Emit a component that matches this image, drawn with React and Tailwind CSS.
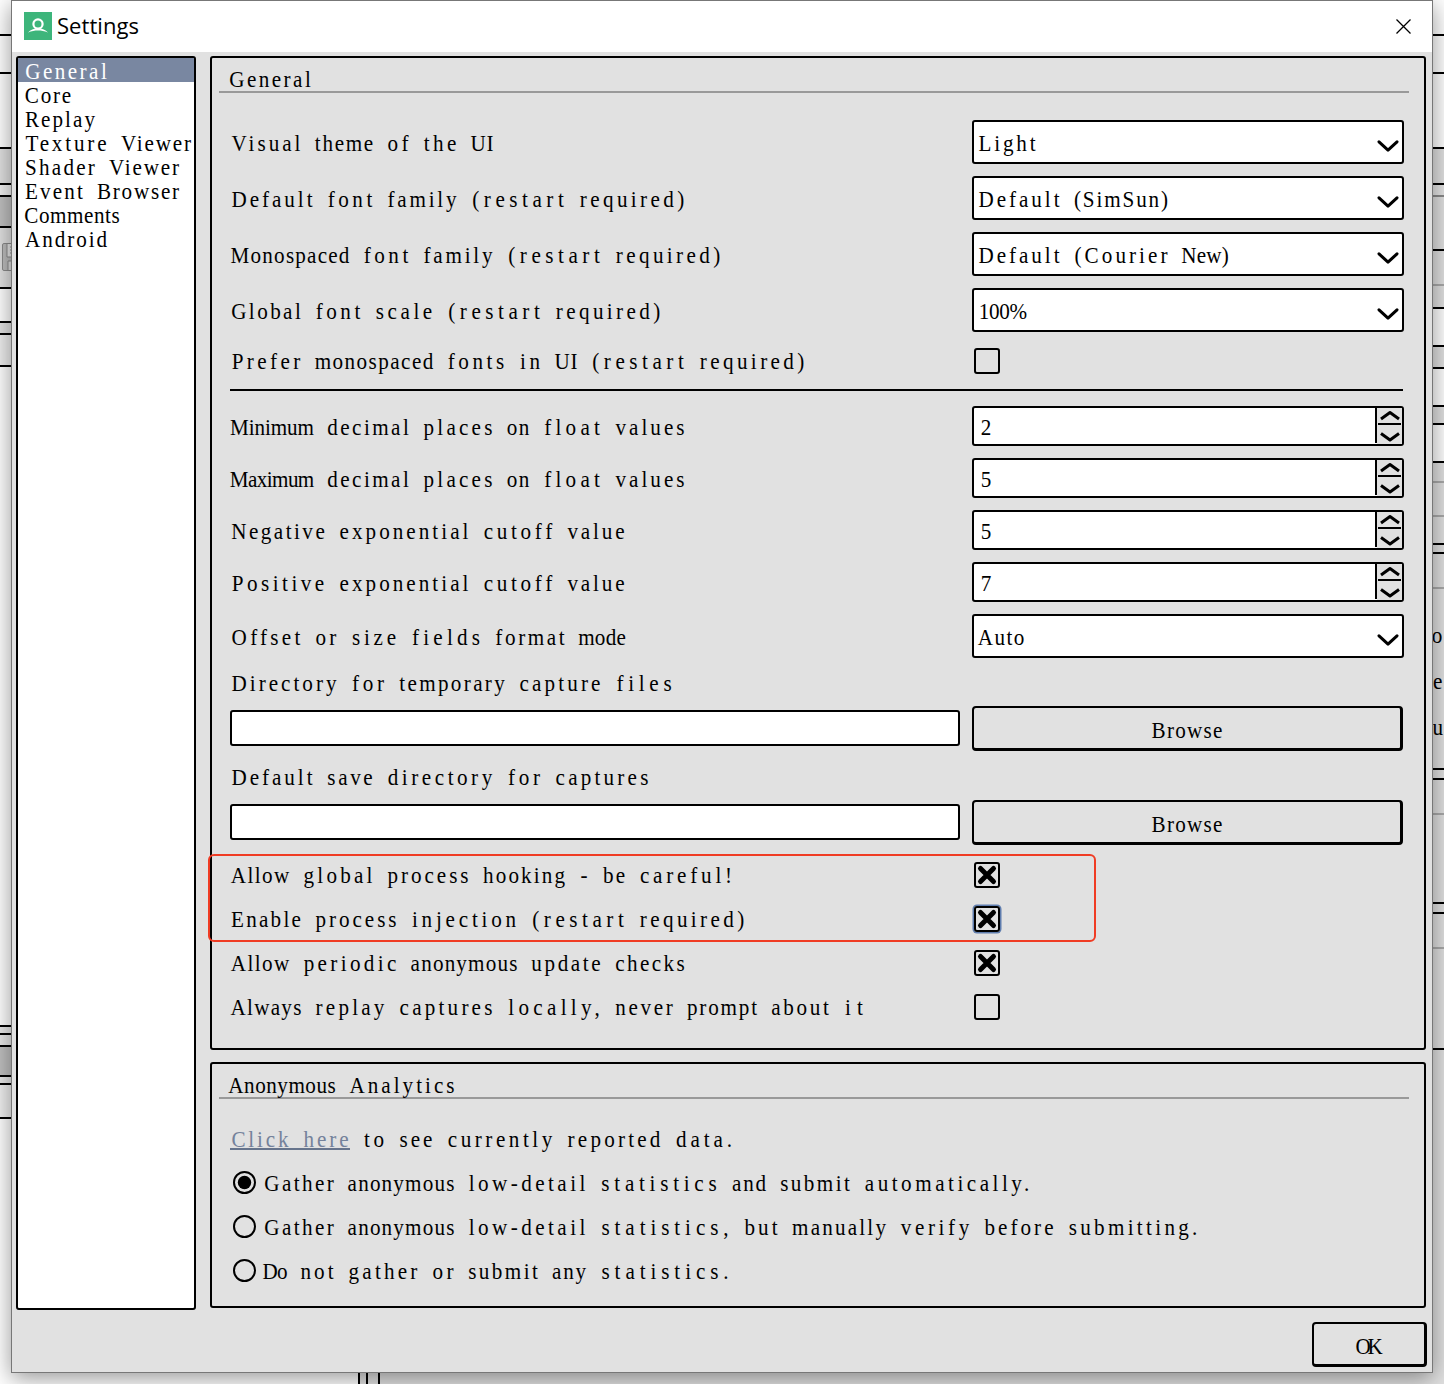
import { Fragment } from "react";
import { clsx } from "clsx";

const SQUEEZE = 0.88;
const CELL = 12 / SQUEEZE;
const ctx = document.createElement("canvas").getContext("2d");

// Narrow serif text where each word and each space sits on a 12px grid
function Mono({ children, raised, className }) {
  ctx.font = '24px "Liberation Serif"';
  const space = ctx.measureText(" ").width;
  const words = children.split(/(?<=\S )/);
  return (
    <span className={clsx("flex h-6", !raised && "translate-y-px", className)} style={{ width: children.length * 12 }}>
      <span
        className="origin-left font-['Liberation_Serif','Noto_Sans_CJK_SC',serif] text-2xl leading-6 whitespace-pre"
        style={{ transform: `scaleX(${SQUEEZE})` }}
      >
        {words.map((text, index) => {
          const word = text.trim();
          const gap = (CELL * word.length - ctx.measureText(word).width) / word.length;
          return (
            <span
              key={index}
              style={{ letterSpacing: gap, wordSpacing: CELL - space - gap, marginLeft: gap / 2, marginRight: -gap / 2 }}
            >
              {text}
            </span>
          );
        })}
      </span>
    </span>
  );
}

const pages = ["General", "Core", "Replay", "Texture Viewer", "Shader Viewer", "Event Browser", "Comments", "Android"];

const fonts = [
  ["Visual theme of the UI", "Light"],
  ["Default font family (restart required)", "Default (SimSun)"],
  ["Monospaced font family (restart required)", "Default (Courier New)"],
  ["Global font scale (restart required)", "100%"],
];

const numbers = [
  ["Minimum decimal places on float values", "2"],
  ["Maximum decimal places on float values", "5"],
  ["Negative exponential cutoff value", "5"],
  ["Positive exponential cutoff value", "7"],
];

const directories = ["Directory for temporary capture files", "Default save directory for captures"];

const toggles = [
  { label: "Allow global process hooking - be careful!", checked: true },
  { label: "Enable process injection (restart required)", checked: true, focused: true },
  { label: "Allow periodic anonymous update checks", checked: true },
  { label: "Always replay captures locally, never prompt about it", checked: false },
];

const choices = [
  "Gather anonymous low-detail statistics and submit automatically.",
  "Gather anonymous low-detail statistics, but manually verify before submitting.",
  "Do not gather or submit any statistics.",
];

function Chevron() {
  return (
    <svg className="h-3 w-[22px]" viewBox="0 0 22 12" fill="none" stroke="black" strokeWidth="3" strokeLinecap="round" strokeLinejoin="round">
      <path d="M2 1.800 11 10.200 20 1.800" />
    </svg>
  );
}

function Combo({ value }) {
  return (
    <div className="flex h-11 w-[432px] items-center justify-between rounded-[3px] border-2 border-black bg-white pr-[3px]">
      <Mono className={value === "100%" ? "ml-[5px]" : "ml-[3px]"}>{value}</Mono>
      <span className="pt-2">
        <Chevron />
      </span>
    </div>
  );
}

function Spin({ value }) {
  return (
    <div className="flex h-10 w-[432px] rounded-[3px] border-2 border-black bg-white">
      <div className="flex flex-1 items-center pl-1.5">
        <Mono>{value}</Mono>
      </div>
      <div className="mb-px w-0.5 bg-black" />
      <div className="flex w-[25px] flex-col items-center bg-[#e1e1e1] pl-px">
        <svg className="h-9 w-6" viewBox="0 0 24 36" fill="none" stroke="black">
          <path d="M3 11 12 4.500 21 11M3 25.500 12 32 21 25.500" strokeWidth="3" strokeLinejoin="round" />
          <path d="M0 16H23" strokeWidth="2" />
        </svg>
      </div>
    </div>
  );
}

function Checkbox({ checked, focused }) {
  return (
    <div
      className={clsx(
        "ml-0.5 flex size-[26px] items-center justify-center rounded-[3px] border-2 border-black",
        focused && "ring-[1.5px] ring-[#5f7dae]"
      )}
    >
      {checked && (
        <svg className="size-[22px] shrink-0" viewBox="0 0 22 22" stroke="black" strokeWidth="5" strokeLinecap="round">
          <path d="M4.500 4.500 17.500 17.500M17.500 4.500 4.500 17.500" />
        </svg>
      )}
    </div>
  );
}

function Row({ label, children, raised, className }) {
  return (
    <div className={clsx("flex items-center", className)}>
      <div className="flex w-[742px]">
        <Mono raised={raised}>{label}</Mono>
      </div>
      {children}
    </div>
  );
}

function Button({ children, className }) {
  return (
    <button className={clsx("flex h-[45px] items-center justify-center rounded-[4px] border-2 border-r-[3px] border-b-[3px] border-black pt-1", className)}>
      <Mono raised>{children}</Mono>
    </button>
  );
}

function Group({ title, children, className }) {
  return (
    <section className={clsx("rounded-[3px] border-2 border-black", className)}>
      <h2 className="mr-[15px] ml-[7px] flex h-[35px] items-end border-b-2 border-[#999] pl-[9px] font-normal">
        <Mono className="mb-px">{title}</Mono>
      </h2>
      <div className="pr-5 pl-[18px]">{children}</div>
    </section>
  );
}

// [height, fill, bottom line]
const leftEdge = [
  [36, "bg-white", "border-black"],
  [38, "bg-white", "border-black"],
  [75, "bg-white", "border-black"],
  [36, "bg-[#e1e1e1]", "border-black"],
  [12, "bg-[#f0f0f0]", "border-black"],
  [31, "bg-[#c0c0c0]", "border-black"],
  [61, "bg-[#e1e1e1]", "border-black", "save"],
  [34, "bg-white", "border-black"],
  [12, "bg-[#e1e1e1]", "border-black"],
  [32, "bg-[#eee]", "border-black"],
  [660, "bg-white", "border-black"],
  [8, "bg-[#e8e8e8]", "border-black"],
  [12, "bg-[#e8e8e8]", "border-black"],
  [30, "bg-[#c0c0c0]", "border-black"],
  [8, "bg-[#e8e8e8]", "border-black"],
  [34, "bg-[#f0f0f0]", "border-black"],
  [254, "bg-white", "border-transparent"],
];

const rightEdge = [
  [36, "bg-white", "border-black"],
  [38, "bg-white", "border-black"],
  [75, "bg-white", "border-black"],
  [36, "bg-[#e1e1e1]", "border-black"],
  [12, "bg-[#e6e6e6]", "border-[#8a8a8a]"],
  [54, "bg-[#e1e1e1]", "border-black"],
  [35, "bg-[#e1e1e1]", "border-[#aaa]"],
  [23, "bg-[#e1e1e1]", "border-black"],
  [38, "bg-white", "border-black"],
  [22, "bg-[#e1e1e1]", "border-black"],
  [38, "bg-white", "border-black"],
  [18, "bg-[#e1e1e1]", "border-black"],
  [38, "bg-white", "border-black"],
  [20, "bg-[#e1e1e1]", "border-[#aaa]"],
  [34, "bg-[#e1e1e1]", "border-[#aaa]"],
  [28, "bg-[#e1e1e1]", "border-black"],
  [9, "bg-[#e1e1e1]", "border-black"],
  [35, "bg-[#e1e1e1]", "border-[#aaa]"],
  [181, "bg-[#e1e1e1]", "border-black", "text"],
  [10, "bg-[#e1e1e1]", "border-black"],
  [35, "bg-[#e1e1e1]", "border-[#aaa]"],
  [89, "bg-[#e1e1e1]", "border-black"],
  [10, "bg-[#e1e1e1]", "border-black"],
  [35, "bg-[#e1e1e1]", "border-[#aaa]"],
  [101, "bg-[#e1e1e1]", "border-black"],
  [323, "bg-[#e1e1e1]", "border-transparent"],
];

function Edge({ parts }) {
  return (
    <div className="flex w-[11px] shrink-0 flex-col overflow-hidden">
      {parts.map(([height, fill, line, extra], index) => (
        <div key={index} className={clsx("shrink-0 overflow-hidden border-b-2", fill, line)} style={{ height }}>
          {extra === "save" && (
            <svg className="mt-3.5 ml-0.5 h-[30px] w-[26px]" viewBox="0 0 26 30" fill="#bdbdbd" stroke="#8b8b8b">
              <rect x="0.5" y="1.5" width="25" height="27" rx="1.5" />
              <path d="M5 2v13h16V2" fill="#e8e8e8" />
              <path d="M8 5h10M8 8h10M8 11h10" />
              <path d="M6 28v-9h14v9" fill="#e0e0e0" />
            </svg>
          )}
          {extra === "text" && (
            <div className="-ml-0.5 flex flex-col gap-[22px] pt-[33px]">
              <Mono>o</Mono>
              <Mono>er</Mono>
              <Mono>ur</Mono>
            </div>
          )}
        </div>
      ))}
    </div>
  );
}

export default function App() {
  return (
    <div className="flex h-[1384px] w-[1444px] flex-col overflow-hidden bg-[#e1e1e1] text-black">
      <div className="flex h-[1373px] shrink-0">
        <Edge parts={leftEdge} />

        <main className="relative z-10 flex w-[1422px] shrink-0 flex-col border border-[#777] bg-[#e1e1e1] shadow-[0_5px_22px_rgba(0,0,0,0.42)]">
          <header className="flex h-[51px] shrink-0 items-center bg-white pl-3">
            <svg className="mb-px size-7" viewBox="0 0 28 28" fill="none">
              <rect width="28" height="28" fill="#3db57b" />
              <circle cx="14" cy="12" r="4.6" stroke="white" strokeWidth="2.2" />
              <path d="M4 20.500C7 17.500 10.500 16.200 14 16.200s7 1.300 10 4.300c-4-1.500-6.500-2-10-2s-6 .5-10 2Z" fill="white" />
            </svg>
            <h1 className="mb-[3px] ml-[5px] font-['Open_Sans',sans-serif] text-[22px] leading-7 tracking-[0.06px]">Settings</h1>
            <svg className="mr-[21px] ml-auto size-[15px]" viewBox="0 0 15 15" stroke="black" strokeWidth="1.3">
              <path d="M0.500 0.500 14.500 14.500M14.500 0.500 0.500 14.500" />
            </svg>
          </header>

          <div className="flex pt-1 pl-1">
            <nav className="flex h-[1254px] w-[180px] flex-col rounded-[3px] border-2 border-black bg-white">
              {pages.map((page, index) => (
                <div key={page} className={clsx("flex h-6 pl-1.5", index === 0 && "bg-[#7987a1] text-white")}>
                  <Mono>{page}</Mono>
                </div>
              ))}
            </nav>

            <div className="ml-3.5 flex w-[1216px] flex-col gap-3">
              <Group title="General" className="h-[994px]">
                <div className="flex flex-col gap-3 pt-[27px]">
                  {fonts.map(([label, value]) => (
                    <Row key={label} label={label}>
                      <Combo value={value} />
                    </Row>
                  ))}
                </div>
                <Row label="Prefer monospaced fonts in UI (restart required)" raised className="mt-4">
                  <Checkbox />
                </Row>
                <hr className="mt-[15px] mr-px border-t-2 border-black" />
                <div className="flex flex-col gap-3 pt-[15px]">
                  {numbers.map(([label, value]) => (
                    <Row key={label} label={label}>
                      <Spin value={value} />
                    </Row>
                  ))}
                  <Row label="Offset or size fields format mode">
                    <Combo value="Auto" />
                  </Row>
                </div>
                <div className="pt-[13px]">
                  {directories.map((label, index) => (
                    <Fragment key={label}>
                      <div className={clsx("flex h-6", index > 0 && "mt-3.5")}>
                        <Mono raised>{label}</Mono>
                      </div>
                      <div className="mt-[11px] flex gap-3">
                        <div className="mt-1 h-9 w-[730px] rounded-[3px] border-2 border-black bg-white" />
                        <Button className="w-[431px]">Browse</Button>
                      </div>
                    </Fragment>
                  ))}
                </div>
                <div className="relative flex flex-col gap-[18px] pt-[17px]">
                  {toggles.map(({ label, checked, focused }) => (
                    <Row key={label} label={label} raised>
                      <Checkbox checked={checked} focused={focused} />
                    </Row>
                  ))}
                  <div className="absolute top-[9px] -left-[22px] h-[88px] w-[888px] rounded-md border-2 border-[#f03c24]" />
                </div>
              </Group>

              <Group title="Anonymous Analytics" className="h-[246px]">
                <div className="flex flex-col gap-5 pt-7">
                  <div className="flex h-6">
                    <a className="flex h-[23px] border-b-2 border-[#66748c] text-[#74829b]">
                      <Mono raised>Click here</Mono>
                    </a>
                    <Mono raised className="ml-3">
                      to see currently reported data.
                    </Mono>
                  </div>
                  {choices.map((label, index) => (
                    <div key={label} className="flex h-6 items-center">
                      <svg className="mb-px ml-[3px] size-[23px]" viewBox="0 0 23 23">
                        <circle cx="11.500" cy="11.500" r="10.500" fill="none" stroke="black" strokeWidth="2" />
                        {index === 0 && <circle cx="11.500" cy="11.500" r="6.700" />}
                      </svg>
                      <Mono raised className="ml-[7px]">
                        {label}
                      </Mono>
                    </div>
                  ))}
                </div>
              </Group>
            </div>
          </div>

          <div className="mt-3 mr-[5px] flex justify-end">
            <Button className="w-[115px]">OK</Button>
          </div>
        </main>

        <Edge parts={rightEdge} />
      </div>

      <div className="flex h-[11px]">
        <div className="w-[360px] border-r-2 border-black bg-white" />
        <div className="w-2 border-r-2 border-black" />
        <div className="w-3 border-r-2 border-black" />
      </div>
    </div>
  );
}
